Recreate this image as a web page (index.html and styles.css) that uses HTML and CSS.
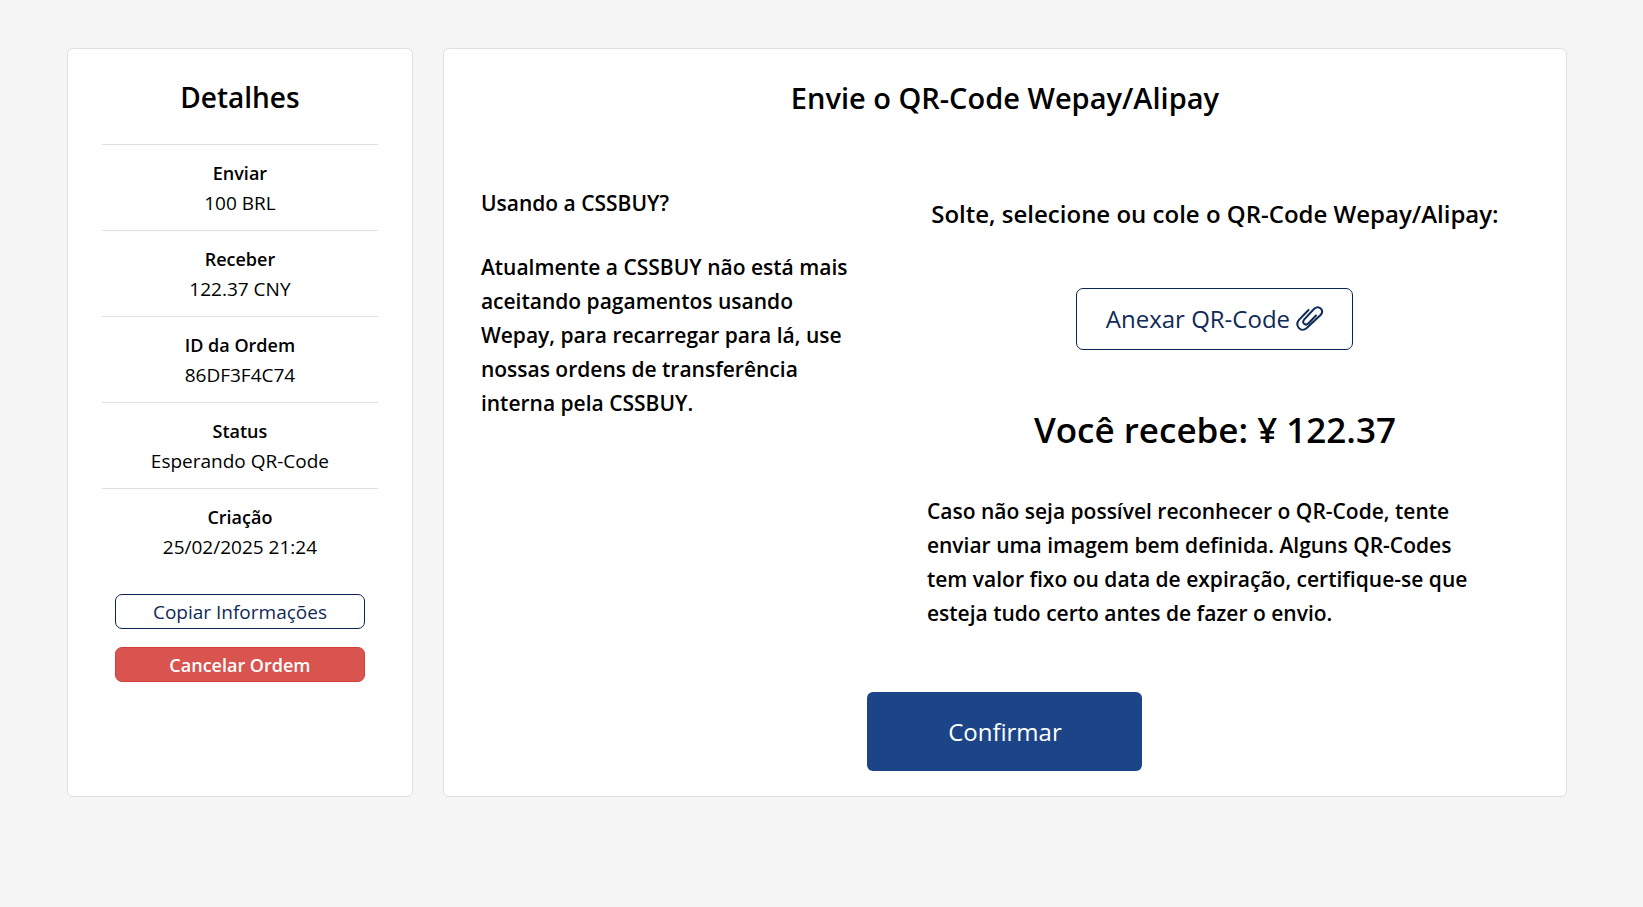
FILE: index.html
```html
<!DOCTYPE html>
<html lang="pt-BR">
<head>
<meta charset="utf-8">
<title>Envie o QR-Code Wepay/Alipay</title>
<link rel="stylesheet" href="styles.css">
</head>
<body>
<main class="page">
  <aside class="card details">
    <h1 class="title">Detalhes</h1>
    <dl class="rows">
      <div class="row"><dt>Enviar</dt><dd>100 BRL</dd></div>
      <div class="row"><dt>Receber</dt><dd>122.37 CNY</dd></div>
      <div class="row"><dt>ID da Ordem</dt><dd>86DF3F4C74</dd></div>
      <div class="row"><dt>Status</dt><dd>Esperando QR-Code</dd></div>
      <div class="row"><dt>Criação</dt><dd>25/02/2025 21:24</dd></div>
    </dl>
    <div class="actions">
      <button type="button" class="btn btn-outline">Copiar Informações</button>
      <button type="button" class="btn btn-danger">Cancelar Ordem</button>
    </div>
  </aside>
  <section class="card upload">
    <h1 class="title">Envie o QR-Code Wepay/Alipay</h1>
    <div class="columns">
      <div class="notice">
        <p>Usando a CSSBUY?</p>
        <p>Atualmente a CSSBUY não está mais aceitando pagamentos usando Wepay, para recarregar para lá, use nossas ordens de transferência interna pela CSSBUY.</p>
      </div>
      <div class="drop">
        <h2 class="drop-title">Solte, selecione ou cole o QR-Code Wepay/Alipay:</h2>
        <button type="button" class="btn btn-outline btn-attach">Anexar QR-Code
          <svg class="clip" viewBox="0 0 28 26" aria-hidden="true"><path d="M12.500 4L3 13.800C-1.500 19.500 4.500 27 10.500 22.300L24.800 8.800C28.500 4 23 -1 18.200 2.800L8.300 13.300C5.300 17 9.300 20.300 12.500 17.300L20 9.500"/></svg>
        </button>
        <p class="amount">Você recebe: ¥ 122.37</p>
        <p class="hint">Caso não seja possível reconhecer o QR-Code, tente enviar uma imagem bem definida. Alguns QR-Codes tem valor fixo ou data de expiração, certifique-se que esteja tudo certo antes de fazer o envio.</p>
      </div>
    </div>
    <button type="button" class="btn btn-primary">Confirmar</button>
  </section>
</main>
</body>
</html>
```
FILE: styles.css
```css
* { box-sizing: border-box; margin: 0; padding: 0; }

body {
  background: #f5f5f5;
  color: #000;
  font-family: "Open Sans", "Noto Sans", sans-serif;
  font-size: 19px;
  line-height: 30px;
}

.page {
  display: grid;
  grid-template-columns: 4fr 13fr;
  gap: 30px;
  padding: 48px 76px 48px 67px;
}

.card {
  display: flex;
  flex-direction: column;
  background: #fff;
  border: 1px solid #e0e0e0;
  border-radius: 6px;
  padding: 26px 34px 25px;
}

.title {
  font-size: 29px;
  font-weight: 600;
  line-height: 45px;
  text-align: center;
}
.details .title { font-size: 28px; }

.rows { margin-top: 24px; text-align: center; }
.row { border-top: 1px solid #e0e0e0; padding: 13px 0 12px; }
.row dt { font-size: 18px; font-weight: 600; }

.actions {
  display: flex;
  flex-direction: column;
  gap: 18px;
  padding: 20px 13px 0;
}

.btn {
  font: inherit;
  border: 1px solid transparent;
  border-radius: 7px;
  height: 35px;
  padding-top: 1px;
  cursor: pointer;
}
.btn-outline { background: #fff; border-color: #0a2552; color: #0f2a56; }
.btn-danger { background: #d9534f; border-color: #d43f3a; color: #fff; font-size: 18px; font-weight: 600; }

.upload { padding-left: 37px; padding-right: 37px; }
.columns {
  display: grid;
  grid-template-columns: 375fr 576fr;
  gap: 71px;
  margin-top: 66px;
  padding-right: 26px;
  font-size: 21px;
  font-weight: 600;
  line-height: 34px;
}
.notice { display: flex; flex-direction: column; gap: 30px; }

.drop { display: flex; flex-direction: column; align-items: center; padding-top: 10px; }
.drop-title { font-size: 24px; font-weight: 600; line-height: 36px; white-space: nowrap; }
.btn-attach {
  display: flex;
  align-items: center;
  justify-content: center;
  gap: 6px;
  width: 277px;
  height: 62px;
  margin-top: 56px;
  padding-top: 0;
  font-size: 24px;
  font-weight: 400;
}
.clip {
  width: 28px;
  height: 26px;
  fill: none;
  stroke: currentColor;
  stroke-width: 2;
  stroke-linecap: round;
}
.amount { margin-top: 52px; font-size: 35px; line-height: 56px; white-space: nowrap; }
.hint { margin-top: 36px; padding-right: 20px; }

.btn-primary {
  align-self: center;
  width: 275px;
  height: 79px;
  margin-top: 62px;
  border-radius: 6px;
  background: #1c4587;
  color: #fff;
  font-size: 24px;
}
```
